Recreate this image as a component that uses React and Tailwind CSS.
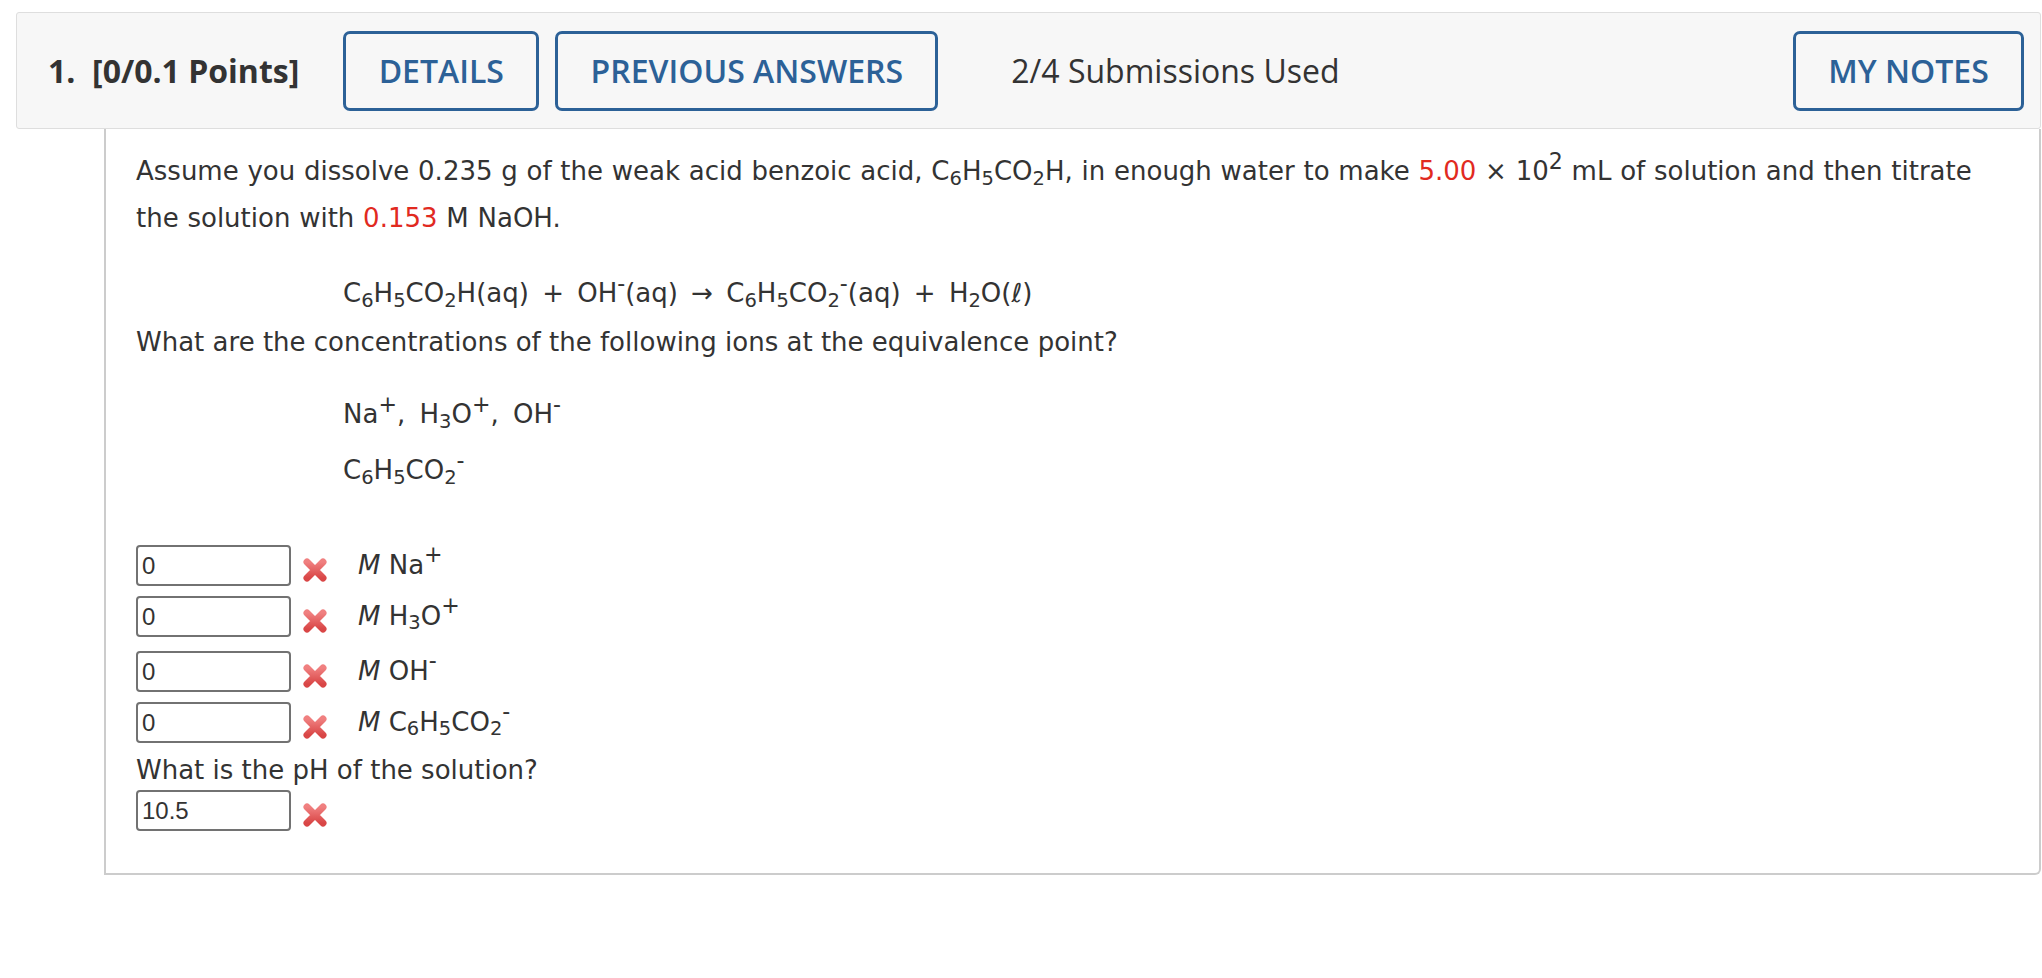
import React from "react";

function Btn({ className = "", children }) {
  return (
    <div
      className={
        "h-[80px] border-[3px] border-[#2c6197] rounded-[7px] flex items-center justify-center text-[32px] font-semibold text-[#2c6197] shrink-0 " +
        className
      }
    >
      {children}
    </div>
  );
}

function XMark({ className = "" }) {
  return (
    <svg
      width="26"
      height="26"
      viewBox="0 0 26 26"
      className={"shrink-0 " + className}
    >
      <defs>
        <linearGradient id="xg" x1="0" y1="0" x2="0" y2="1">
          <stop offset="0" stopColor="#f08080" />
          <stop offset="1" stopColor="#d94646" />
        </linearGradient>
      </defs>
      <path
        d="M5 5 L21 21 M21 5 L5 21"
        stroke="url(#xg)"
        strokeWidth="7"
        strokeLinecap="round"
        fill="none"
      />
    </svg>
  );
}

function Red({ children }) {
  return <span className="text-[#e12a1f]">{children}</span>;
}

function Sb({ children }) {
  return <sub className="text-[75%]">{children}</sub>;
}

function Sp({ children }) {
  return <sup className="text-[85%]">{children}</sup>;
}

function AnswerInput({ value }) {
  return (
    <div
      className="w-[155px] h-[41px] border-2 border-[#727272] rounded-[4px] flex items-center pl-[4px] text-[24px] text-[#333] shrink-0 bg-white"
      style={{ fontFamily: "'Liberation Sans', Arial, sans-serif" }}
    >
      {value}
    </div>
  );
}

function Row({ value, children, className = "" }) {
  return (
    <div className={"flex items-center h-[41px] " + className}>
      <AnswerInput value={value} />
      <XMark className="ml-[11px] mt-[8px]" />
      {children ? (
        <div className="ml-[30px] leading-[28px] whitespace-nowrap -mt-[2px]">{children}</div>
      ) : null}
    </div>
  );
}

export default function App() {
  return (
    <div className="w-[2042px] h-[978px] bg-white overflow-hidden">
      <div className="pt-[12px] pl-[16px] pr-[1px]">
        <div
          className="h-[117px] border border-[#dedede] bg-[#f7f7f7] rounded-[3px] flex items-center pl-[31px] pr-[16px] whitespace-nowrap"
          style={{ fontFamily: "'Open Sans', sans-serif" }}
        >
          <div className="text-[32px] font-bold text-[#333]">1.&nbsp; [0/0.1 Points]</div>
          <Btn className="ml-[44px] w-[196px]">DETAILS</Btn>
          <Btn className="ml-[16px] w-[383px]">PREVIOUS ANSWERS</Btn>
          <div className="ml-[73px] text-[32px] text-[#333]">2/4 Submissions Used</div>
          <Btn className="ml-auto w-[231px]">MY NOTES</Btn>
        </div>

        <div
          className="ml-[88px] border-l-2 border-r-2 border-b-2 border-[#cccccc] rounded-br-[6px] pl-[30px] pt-[19px] pb-[42px] text-[26px] text-[#333] whitespace-nowrap"
          style={{ fontFamily: "'DejaVu Sans', Verdana, sans-serif" }}
        >
          <p className="leading-[47px] [word-spacing:0.5px]">
            Assume you dissolve 0.235 g of the weak acid benzoic acid, C<Sb>6</Sb>H<Sb>5</Sb>CO<Sb>2</Sb>H, in enough water to make{" "}
            <Red>5.00</Red> × 10<Sp>2</Sp> mL of solution and then titrate
            <br />
            the solution with <Red>0.153</Red> M NaOH.
          </p>

          <div className="mt-[28px] pl-[207px] leading-[47px] [word-spacing:5px]">
            C<Sb>6</Sb>H<Sb>5</Sb>CO<Sb>2</Sb>H(aq) + OH<Sp>-</Sp>(aq) → C<Sb>6</Sb>H<Sb>5</Sb>CO<Sb>2</Sb>
            <Sp>-</Sp>(aq) + H<Sb>2</Sb>O(ℓ)
          </div>

          <div className="mt-[2px] leading-[47px]">
            What are the concentrations of the following ions at the equivalence point?
          </div>

          <div className="mt-[25px] pl-[207px] leading-[47px] [word-spacing:6px]">
            Na<Sp>+</Sp>, H<Sb>3</Sb>O<Sp>+</Sp>, OH<Sp>-</Sp>
          </div>
          <div className="mt-[9px] pl-[207px] leading-[47px]">
            C<Sb>6</Sb>H<Sb>5</Sb>CO<Sb>2</Sb>
            <Sp>-</Sp>
          </div>

          <Row value="0" className="mt-[51px]">
            <i>M</i> Na<Sp>+</Sp>
          </Row>
          <Row value="0" className="mt-[10px]">
            <i>M</i> H<Sb>3</Sb>O<Sp>+</Sp>
          </Row>
          <Row value="0" className="mt-[14px]">
            <i>M</i> OH<Sp>-</Sp>
          </Row>
          <Row value="0" className="mt-[10px]">
            <i>M</i> C<Sb>6</Sb>H<Sb>5</Sb>CO<Sb>2</Sb>
            <Sp>-</Sp>
          </Row>

          <div className="mt-[12px] leading-[30px]">What is the pH of the solution?</div>
          <Row value="10.5" className="mt-[5px]" />
        </div>
      </div>
    </div>
  );
}
